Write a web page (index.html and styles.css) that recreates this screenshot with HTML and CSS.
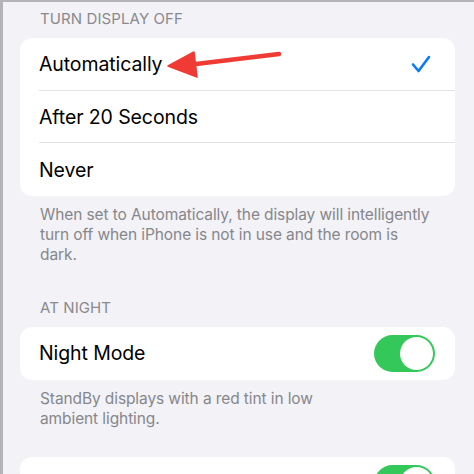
FILE: index.html
```html
<!DOCTYPE html>
<html>
<head>
<meta charset="utf-8">
<link rel="stylesheet" href="styles.css">
</head>
<body>
<div class="screen">
  <div class="section-header">TURN DISPLAY OFF</div>
  <div class="card">
    <div class="row">
      <span class="label">Automatically</span>
      <svg class="check" width="20" height="18" viewBox="0 0 20 18">
        <polyline points="2,9.5 7.5,16 18,2" fill="none" stroke="#0a7aff" stroke-width="2.6" stroke-linecap="round" stroke-linejoin="round"/>
      </svg>
    </div>
    <div class="row">
      <span class="label">After 20 Seconds</span>
    </div>
    <div class="row">
      <span class="label">Never</span>
    </div>
    <svg class="annotation" width="120" height="40" viewBox="0 0 120 40">
      <line x1="28" y1="24" x2="111" y2="14" stroke="#ef3b33" stroke-width="4.5" stroke-linecap="round"/>
      <polygon points="0,26 26,12 29,37" fill="#ef3b33" stroke="#ef3b33" stroke-width="1.5" stroke-linejoin="round"/>
    </svg>
  </div>
  <div class="section-footer">When set to Automatically, the display will intelligently turn off when iPhone is not in use and the room is dark.</div>

  <div class="section-header spaced">AT NIGHT</div>
  <div class="card">
    <div class="row">
      <span class="label">Night Mode</span>
      <span class="toggle on"><span class="knob"></span></span>
    </div>
  </div>
  <div class="section-footer narrow">StandBy displays with a red tint in low ambient lighting.</div>

  <div class="card next">
    <div class="row">
      <span class="label"></span>
      <span class="toggle on"><span class="knob"></span></span>
    </div>
  </div>
</div>
</body>
</html>
```
FILE: styles.css
```css
* { box-sizing: border-box; }

html, body {
  margin: 0;
  padding: 0;
  height: 100%;
  overflow: hidden;
  background: #f2f2f7;
}

body {
  font-family: Inter, "Noto Sans", "Liberation Sans", sans-serif;
  -webkit-font-smoothing: antialiased;
}

.screen {
  height: 474px;
  overflow: hidden;
  border-top: 2px solid #b4b4b8;
  border-left: 3px solid #b4b4b8;
  padding: 7px 19px 0 17px;
  background: #f2f2f7;
}

.section-header {
  font-size: 15px;
  line-height: 20px;
  color: #8a8a8e;
  padding-left: 20px;
  margin-bottom: 9px;
  letter-spacing: 0.1px;
}

.section-header.spaced {
  margin-top: 33px;
}

.card {
  position: relative;
  background: #ffffff;
  border-radius: 12px;
  padding-left: 19px;
}

.card.next {
  margin-top: 28px;
}

.row {
  display: flex;
  align-items: center;
  justify-content: space-between;
  height: 52.7px;
  padding-right: 20px;
  border-bottom: 1px solid #e3e3e7;
}

.row:last-of-type {
  border-bottom: none;
}

.label {
  font-size: 19.5px;
  color: #000000;
  letter-spacing: -0.1px;
}

.check {
  margin-right: 4px;
}

.annotation {
  position: absolute;
  left: 148px;
  top: 2px;
  overflow: visible;
}

.section-footer {
  font-size: 15.5px;
  line-height: 20px;
  color: #87878b;
  padding: 0 20px;
  margin-top: 9px;
  letter-spacing: -0.1px;
}

.section-footer.narrow {
  max-width: 330px;
}

.toggle {
  position: relative;
  width: 61px;
  height: 37px;
  border-radius: 19px;
  background: #e9e9eb;
  flex-shrink: 0;
}

.toggle.on {
  background: #34c759;
}

.knob {
  position: absolute;
  top: 2px;
  right: 2px;
  width: 33px;
  height: 33px;
  border-radius: 50%;
  background: #ffffff;
}
```
